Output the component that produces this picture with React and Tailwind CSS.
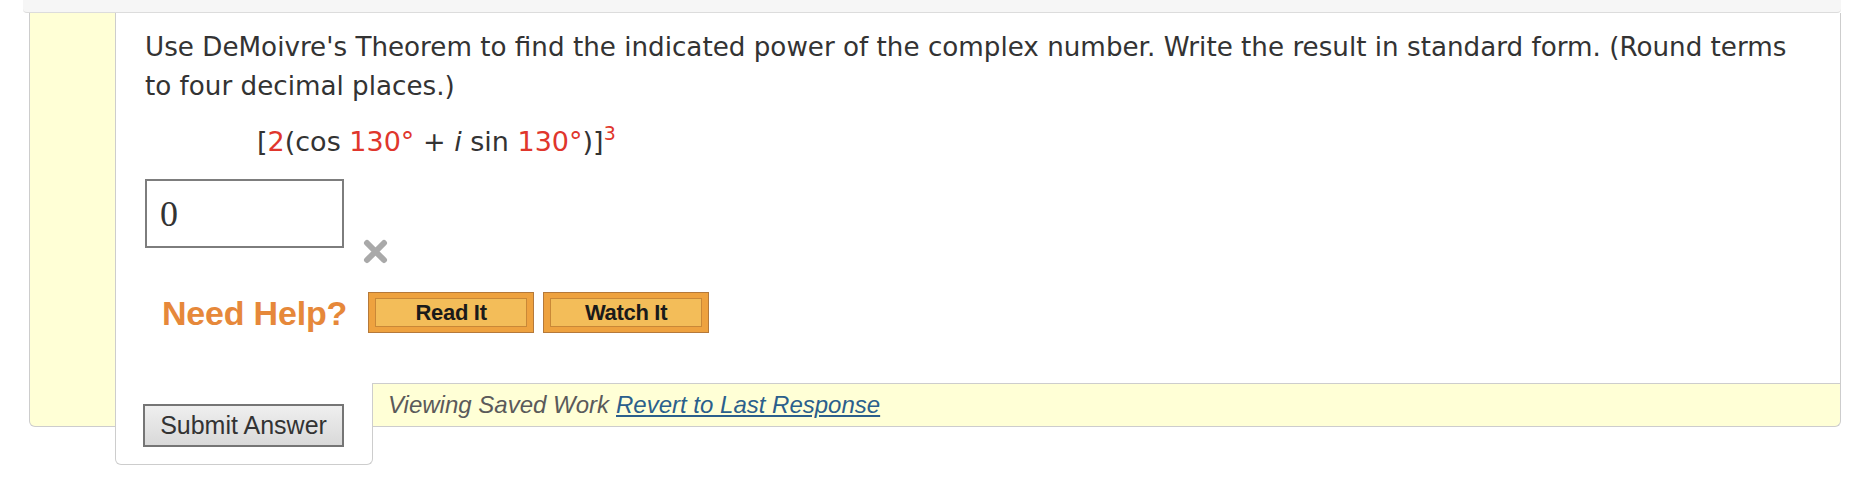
import React from "react";

function XIcon() {
  return (
    <svg width="27" height="27" viewBox="0 0 27 27" className="blur-[0.6px]">
      <path d="M5 5 L22 22 M22 5 L5 22" stroke="#a9a9a9" strokeWidth="6" strokeLinecap="round" />
    </svg>
  );
}

function HelpButton({ label }) {
  return (
    <div className="flex h-[41px] w-[166px] items-stretch border border-[#b5793a] bg-[#eea23f] px-[6px] py-[5px]">
      <div className="flex flex-1 items-center justify-center border border-[#c98837] bg-[#f3bd59] text-[22px] leading-none font-bold tracking-[-0.3px] text-[#1a1a1a] [font-family:'Liberation_Sans',Arial,sans-serif]">
        {label}
      </div>
    </div>
  );
}

export default function App() {
  const red = "text-[#e0362c]";
  return (
    <div className="h-[492px] w-full overflow-hidden bg-white">
      <div className="ml-[23px] h-[13px] w-[1818px] rounded-b-[4px] border-b border-[#dcdcdc] bg-[#f6f6f6]" />
      <div className="ml-[29px] flex w-[1812px] rounded-b-[6px] border-x border-b border-[#cdcdcd] bg-[#ffffd6]">
        <div className="w-[85px] shrink-0" />
        <div className="flex flex-1 flex-col">
          <div className="border-l border-[#cdcdcd] bg-white pt-[15px] pb-[50px] pl-[29px] text-[#333] [font-family:'DejaVu_Sans',Verdana,sans-serif]">
            <p className="w-[1645px] text-[26.2px] leading-[39px]">
              Use DeMoivre's Theorem to find the indicated power of the complex number. Write the result in standard form. (Round terms to four decimal places.)
            </p>
            <div className="mt-[16px] ml-[112px] text-[27px] leading-[39px]">
              [<span className={red}>2</span>(cos <span className={red}>130°</span> + <i>i</i> sin <span className={red}>130°</span>)]
              <span className={`${red} relative -top-[11px] text-[19px] leading-none`}>3</span>
            </div>
            <div className="mt-[18px] flex items-start">
              <div className="flex h-[69px] w-[199px] items-center border-2 border-[#7d7d7d] pl-[13px] text-[36px] text-[#333] [font-family:'Liberation_Serif','Times_New_Roman',serif]">
                0
              </div>
              <div className="mt-[59px] ml-[18px]">
                <XIcon />
              </div>
            </div>
            <div className="mt-[27px] flex items-center">
              <span className="ml-[17px] text-[34px] leading-none font-bold tracking-[-0.2px] text-[#e6883a] [font-family:'Liberation_Sans',Arial,sans-serif]">
                Need Help?
              </span>
              <div className="ml-[21px] flex gap-[9px]">
                <HelpButton label="Read It" />
                <HelpButton label="Watch It" />
              </div>
            </div>
          </div>
          <div className="flex h-[43px]">
            <div className="relative z-10 mb-[-39px] h-[82px] w-[258px] shrink-0 rounded-b-[6px] border-x border-b border-[#cdcdcd] bg-white pt-[21px] pl-[27px]">
              <button className="flex h-[43px] w-[201px] items-center justify-center border-2 border-[#757575] bg-gradient-to-b from-[#efefef] to-[#d9d9d9] text-[25px] text-[#333] [font-family:'Liberation_Sans',Arial,sans-serif]">
                Submit Answer
              </button>
            </div>
            <div className="flex flex-1 items-center border-t border-[#cdcdcd] pl-[15px] text-[24px] italic [font-family:'Liberation_Sans',Arial,sans-serif]">
              <span className="text-[#5a5a5a]">Viewing Saved Work</span>
              <a className="ml-[7px] text-[#2b5f8c] underline">Revert to Last Response</a>
            </div>
          </div>
        </div>
      </div>
    </div>
  );
}
